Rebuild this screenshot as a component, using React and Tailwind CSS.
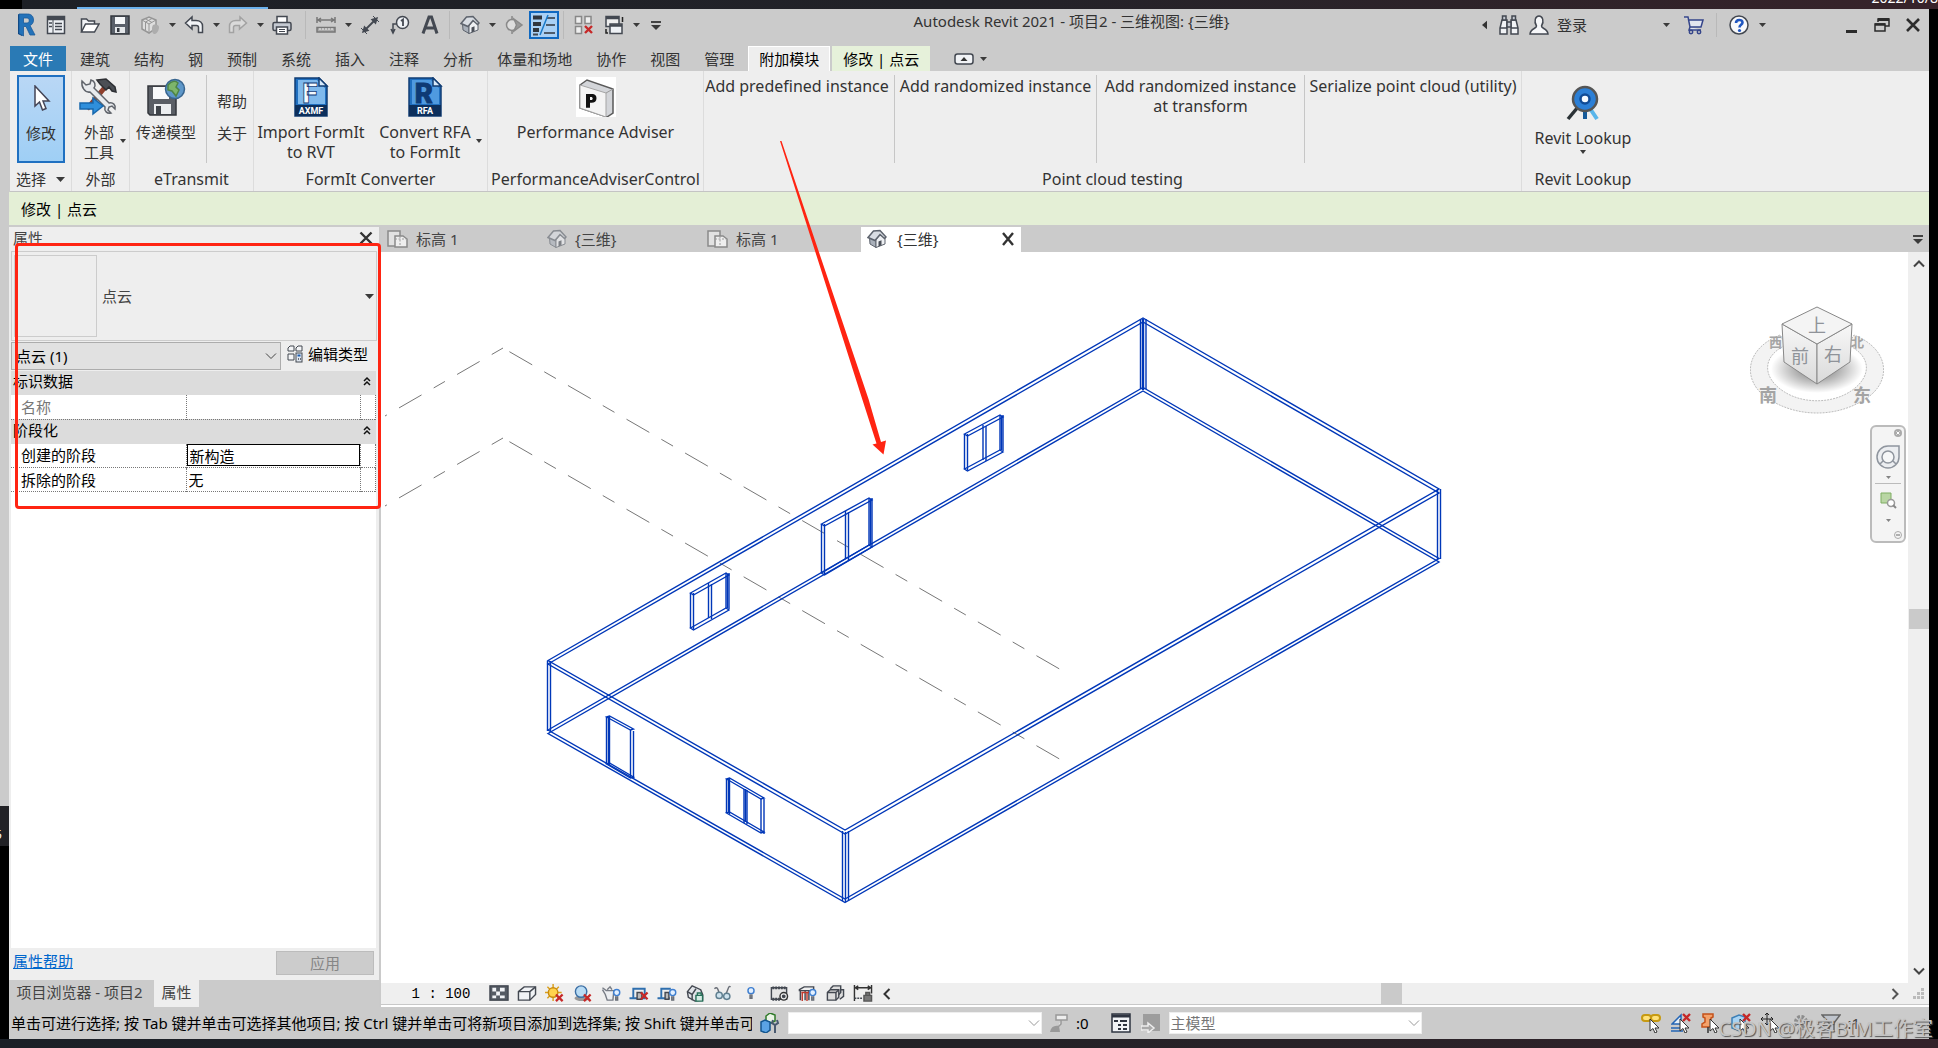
import React from "react";

const BLUE = "#0037b8";

/* ---------- small helpers ---------- */

function Icon({ children, className = "h-5 w-5", box = "0 0 20 20" }) {
  return (
    <svg viewBox={box} className={`shrink-0 ${className}`} fill="none" stroke="#434851" strokeWidth="1.5" aria-hidden="true">
      {children}
    </svg>
  );
}

function Caret({ className = "h-1 w-[7px]" }) {
  return (
    <svg viewBox="0 0 8 5" preserveAspectRatio="none" className={`shrink-0 ${className}`} aria-hidden="true">
      <path d="M0 0H8L4 5Z" fill="#3a3a3a" />
    </svg>
  );
}

function Chevron({ className }) {
  return (
    <svg viewBox="0 0 12 12" className={`h-3 w-3 shrink-0 ${className}`} fill="none" stroke="currentColor" aria-hidden="true">
      <path d="M1 3.5L6 8.5L11 3.5" />
    </svg>
  );
}

function RedCross({ x = 12, y = 12, s = 6 }) {
  return <path d={`M${x} ${y}l${s} ${s}M${x + s} ${y}l${-s} ${s}`} stroke="#c62828" strokeWidth="2.4" />;
}

function Bulb({ x = 15, y = 9 }) {
  return (
    <g stroke="#3f7fd0" strokeWidth="1.5">
      <circle cx={x} cy={y} r="3.2" fill="#e3f0ff" />
      <path d={`M${x - 1} ${y + 4}v4h2v-4`} fill="#8a8f98" stroke="#6a6f78" />
    </g>
  );
}

/* ---------- quick access icons ---------- */

const RevitLogo = (
  <Icon className="h-6 w-5" box="0 0 20 24">
    <path d="M2 1l4 2v20l-4-2z" fill="#0d3f78" stroke="none" />
    <path fillRule="evenodd" d="M3 1h8.500c4 0 6 2.600 6 6 0 2.800-1.400 4.700-3.500 5.500L19 22h-5l-4-8.500H7.500V23L3 20.500zM7.500 5v5H11c1.500 0 2.200-1 2.200-2.500S12.500 5 11 5z" fill="#2372b9" stroke="#1b5a9a" strokeWidth=".8" />
  </Icon>
);
const HomeList = (
  <Icon>
    <rect x="1.500" y="1.500" width="17" height="17" fill="#eef1f5" />
    <path d="M1.500 3.500h17" strokeWidth="3.500" />
    <path d="M7 5v13" strokeWidth="1" /><path d="M3 8h3M3 11.500h3M9 8.500h7M9 11.500h7M9 14.500h7" strokeWidth="1.600" />
  </Icon>
);
const Open = (
  <Icon>
    <path d="M1.500 17V4h5l2 2h6v3" fill="#f1f3f6" />
    <path d="M1.500 17L5.500 9H19l-4.500 8z" fill="#fff" />
  </Icon>
);
const Save = (
  <Icon>
    <path d="M1 1h18v18H1z" fill="#5a606a" stroke="#33373e" />
    <path d="M5 2h10v7H5z" fill="#f4f6f8" stroke="none" />
    <path d="M5 12h10v6H5z" fill="#e4e7ea" stroke="none" /><path d="M7 13h2.500v4H7z" fill="#33373e" stroke="none" />
  </Icon>
);
const Cube = (
  <Icon>
    <g stroke="#969696"><path d="M2 5l7-3 7 3v8l-7 5-7-4z" fill="#dedede" /><path d="M2 5l7 4 7-4M9 9v9M5 3.500l7 4M12 3.500L5.500 7v8" strokeWidth="1" /></g>
    <path d="M13 10c3-1 6 0 6 2s-1 6-4 7-4-6-2-9z" fill="#adadad" stroke="none" />
  </Icon>
);
const Undo = (
  <Icon>
    <path d="M1.500 8L8 2V5.500h4c4 0 6.500 2.500 6.500 5.500V17.500h-4V12.500c0-1.500-.8-2-2-2H8V14z" fill="#f1f3f6" />
  </Icon>
);
const Redo = (
  <Icon>
    <path d="M18.500 8L12 2V5.500H8c-4 0-6.500 2.500-6.500 5.500V17.500h4V12.500c0-1.500.8-2 2-2h4V14z" fill="#dadada" stroke="#a2a2a2" />
  </Icon>
);
const Print = (
  <Icon>
    <path d="M5 8V1.500h10V8" fill="#fff" />
    <rect x="1" y="7.500" width="18" height="8" rx="1.500" fill="#c5cad2" /><path d="M4.500 12h11v7h-11z" fill="#fff" /><path d="M7 14.500h6M7 16.500h6" strokeWidth="1" />
  </Icon>
);
const Measure = (
  <Icon>
    <g stroke="#777"><path d="M1 2v6M19 2v6M2 5h16M5 3L2 5l3 2M15 3l3 2-3 2" /><path d="M1 12.500h18v4.500H1z" fill="#aaa" /><path d="M4 13v2M7 13v2M10 13v2M13 13v2M16 13v2" stroke="#eee" strokeWidth="1" /></g>
  </Icon>
);
const Dim = (
  <Icon>
    <path d="M4.500 15.500l11-11" strokeWidth="1.800" /><path d="M3 17l1.500-5 3.500 3.500zM17 3l-1.500 5L12 4.500z" fill="#434851" /><path d="M1 13l6 6M13 1l6 6" strokeWidth="1" />
  </Icon>
);
const Tag = (
  <Icon>
    <circle cx="12.500" cy="7.500" r="6" fill="#eef1f5" /><path d="M11 6l2-1.500V11" strokeWidth="1.800" /><path d="M6.500 9H3v8M1 14l2 4 2-4" />
  </Icon>
);
const LetterA = (
  <Icon>
    <path d="M3 18.500L9 2h2.500L17 18.500M5.500 13h9" strokeWidth="3" />
  </Icon>
);
const House = (
  <Icon>
    <path d="M2.500 8.500L3 15l6 3.500V10l-3-4.500z" fill="#a9b0ba" stroke="#5d636d" strokeWidth="1" />
    <path d="M9 10.500l4.500-5L18 9v6l-9 3.500z" fill="#eef0f3" stroke="#5d636d" strokeWidth="1" />
    <path d="M1 8.500L6.500 2 13 1.500l6 6.500-1.500 1.500-4.500-4L8 11.500z" fill="#d9dde3" stroke="#5d636d" />
    <path d="M11.500 12.500l3-1.200v5l-3 1.200z" fill="#4a4f58" stroke="none" />
  </Icon>
);
const Section = (
  <Icon>
    <g stroke="#8a8a8a"><path d="M8 1v3M8 16v3" /><circle cx="8" cy="10" r="5.500" fill="#ddd" /><path d="M10 4l8 6-8 6 2.500-6z" fill="#999" /></g>
  </Icon>
);
const ThinLines = (
  <Icon className="h-[22px] w-6" box="0 0 24 22">
    <path d="M1 3.500h9M1 10h8M1 16h6" strokeWidth="4" stroke="#30363f" /><path d="M1 20.500h5" strokeWidth="2" />
    <path d="M15 4h8M14 11h9M12 19h11" stroke="#30363f" /><path d="M16 1L8 21" stroke="#1979c9" strokeWidth="1.500" />
  </Icon>
);
const CloseWins = (
  <Icon>
    <g stroke="#888" fill="#eee"><path d="M1.500 1.500h6v7h-6zM11 1.500h6v7h-6zM1.500 11.500h6v7h-6z" /></g><RedCross x={11} y={11} s={7} />
  </Icon>
);
const SwitchWins = (
  <Icon>
    <rect x="2" y="1.500" width="13" height="10" fill="#eee" /><path d="M2 3h13" strokeWidth="2.500" /><rect x="6" y="9" width="12" height="9.500" fill="#eef1f5" /><path d="M6 10.500h12" strokeWidth="2.500" /><path d="M18.500 2v5M2 14v4h2" stroke="#222" />
  </Icon>
);

const quick = [
  ["应用菜单", RevitLogo], ["主页", HomeList], ["gap"], ["打开", Open], ["保存", Save], ["同步", Cube], ["arrow", "同步选项"],
  ["放弃", Undo], ["arrow", "放弃列表"], ["重做", Redo], ["arrow", "重做列表"], ["打印", Print], ["gap"], ["sep"],
  ["测量", Measure], ["arrow", "测量选项"], ["对齐尺寸标注", Dim], ["按类别标记", Tag], ["文字", LetterA], ["sep"],
  ["默认三维视图", House], ["arrow", "三维视图选项"], ["剖面", Section], ["细线", ThinLines], ["sep"],
  ["关闭非活动视图", CloseWins], ["切换窗口", SwitchWins], ["arrow", "窗口列表"],
];

function QuickItem({ item }) {
  const [name, extra] = item;
  if (name === "gap") return <span className="w-1" />;
  if (name === "sep") return <span className="mx-1 h-7 w-0.5 border-l border-[#b9b9b9]" />;
  if (name === "arrow")
    return (
      <button aria-label={extra} className="flex h-7 w-[14px] items-center justify-center"><Caret /></button>
    );
  return (
    <button
      aria-label={name}
      className={`flex h-7 w-[30px] items-center justify-center ${name === "细线" ? "border-2 border-[#1068c0] bg-[#a9d0f5]" : ""}`}
    >
      {extra}
    </button>
  );
}

function TitleBar() {
  return (
    <header className="flex h-[37px] items-start pt-0.5 text-[#333]">
      <div className="flex items-center pl-0.5">
        {quick.map((q, i) => <QuickItem key={i} item={q} />)}
        <button aria-label="自定义快速访问工具栏" className="ml-2 flex flex-col items-center gap-0.5">
          <span className="h-0.5 w-2.5 bg-[#444]" />
          <Caret className="h-[5px] w-2.5" />
        </button>
      </div>
      <h1 className="flex-1 text-center text-[15px] leading-5 whitespace-nowrap">Autodesk Revit 2021 - 项目2 - 三维视图: {"{三维}"}</h1>
      <div className="flex h-7 items-center pr-2">
        <button aria-label="展开搜索" className="mr-3"><svg viewBox="0 0 6 10" className="h-2.5 w-[5px]"><path d="M6 0V10L0 5Z" fill="#333" /></svg></button>
        <button aria-label="搜索" className="mr-2.5">
          <Icon className="h-5 w-5">
            <path d="M3 5L1 13v6h7V5zM17 5l2 8v6h-7V5z" fill="#f1f3f6" /><path d="M3.500 1h3.500v4H3.500zM13 1h3.500v4H13zM8 7h4v5H8zM1 13h7M12 13h7" fill="#c5cad2" />
          </Icon>
        </button>
        <button className="flex items-center gap-2 text-[15px] leading-5">
          <Icon>
            <path d="M7.500 11c-3-5-1-10 2.500-10s5.500 5 2.500 10c0 3 6 2 6.500 8H1c.5-6 6.500-5 6.500-8z" fill="#f6f7f9" />
          </Icon>
          登录
        </button>
        <button aria-label="登录选项" className="mr-3.5 ml-[76px]"><Caret /></button>
        <button aria-label="应用商店" className="mr-3">
          <Icon><path d="M0 2h4l2 10h11l2-7H5M6 12l-1 3h12" stroke="#35458a" fill="#e3e6ef" /><circle cx="7" cy="17" r="1.700" stroke="#35458a" /><circle cx="15" cy="17" r="1.700" stroke="#35458a" /></Icon>
        </button>
        <span className="mr-3 h-6 border-l border-[#b9b9b9]" />
        <button aria-label="帮助" className="mr-2.5">
          <Icon><circle cx="10" cy="10" r="9" fill="#f8f9fb" /><path d="M7 8c0-4 6.500-4 6.500-.5 0 2.500-3 2.200-3 5" stroke="#2056c0" strokeWidth="2.600" /><circle cx="10.500" cy="15.500" r="1.600" fill="#2056c0" stroke="none" /></Icon>
        </button>
        <button aria-label="帮助选项"><Caret /></button>
        <button aria-label="最小化" className="ml-20 h-4 pt-3"><span className="block h-[3px] w-[11px] bg-[#2b2b2b]" /></button>
        <button aria-label="还原" className="ml-4">
          <Icon className="h-4 w-[18px]" box="0 0 18 16"><path d="M5 5V2h11v7h-4" stroke="#2b2b2b" /><path d="M5 2.500h11" stroke="#2b2b2b" strokeWidth="3" /><path d="M2 7h10v7H2z" stroke="#2b2b2b" /><path d="M2 7.500h10" stroke="#2b2b2b" strokeWidth="2.500" /></Icon>
        </button>
        <button aria-label="关闭" className="ml-3.5"><Icon className="h-4 w-4" box="0 0 16 16"><path d="M2 2l12 12M14 2L2 14" stroke="#2b2b2b" strokeWidth="2.600" /></Icon></button>
      </div>
    </header>
  );
}

/* ---------- ribbon ---------- */

const ribbonTabs = ["建筑", "结构", "钢", "预制", "系统", "插入", "注释", "分析", "体量和场地", "协作", "视图", "管理"];

function RibbonTabs() {
  return (
    <nav className="flex h-[25px] text-[15px] leading-[22px] text-[#333]">
      <button className="ml-px w-14 bg-[#2a7ab5] text-white">文件</button>
      <div className="flex pl-0.5">
        {ribbonTabs.map((t) => <button key={t} className="px-3 whitespace-nowrap">{t}</button>)}
      </div>
      <button className="ml-0.5 border border-b-0 border-white bg-[#eee] px-2.5 text-black">附加模块</button>
      <button className="ml-0.5 bg-[#e6f1da] px-[11px] whitespace-nowrap text-black">修改 | 点云</button>
      <button aria-label="最小化功能区" className="ml-6 flex items-center gap-1.5">
        <Icon className="h-3 w-5" box="0 0 20 12"><rect x="1" y="1" width="18" height="10" rx="2.500" fill="#f1f3f6" /><path d="M6.500 8h7l-3.500-4z" fill="#333" stroke="none" /></Icon>
        <Caret />
      </button>
    </nav>
  );
}

function Panel({ title, className, children, caret }) {
  return (
    <section className={`flex shrink-0 flex-col border-r border-[#dcdcdc] ${className}`}>
      <div className="flex flex-1">{children}</div>
      <h2 className={`flex h-6 items-center justify-center gap-2.5 whitespace-nowrap ${/[a-z]/.test(title) ? "text-base" : ""}`}>
        {title}
        {caret && <Caret className="h-[5px] w-[9px]" />}
      </h2>
    </section>
  );
}

function BigButton({ icon, lines, className = "", arrow }) {
  return (
    <button className={`relative flex flex-col items-center pt-1.5 leading-5 whitespace-nowrap ${className}`}>
      <span className="flex h-[45px] items-start justify-center">{icon}</span>
      {lines.map((l) => <span key={l}>{l}</span>)}
      {arrow && <span className="absolute top-[68px] right-0 flex"><Caret className="h-1 w-1.5" /></span>}
    </button>
  );
}

const Tools = (
  <Icon className="h-10 w-10" box="0 0 40 40">
    <path d="M8 32L27 9" stroke="#8f3f2c" strokeWidth="5" />
    <path d="M18 3l9-1 9 8 1 5-4-1-3-4-3 3-6-6z" fill="#4c4f55" stroke="#2d2f33" />
    <path d="M3 4l4 4 4-1 1-4c4 1 5 5 3 8l15 15c4-1 7 2 6 6l-3-3-3 1-1 3 3 3c-4 1-7-2-6-6L11 15c-5 1-9-5-8-11z" fill="#e9ebee" stroke="#60646b" />
    <path d="M1 26h13v-5l10 8-10 8v-5H1z" fill="#2f8fdc" stroke="#1868ad" />
  </Icon>
);
const Transmit = (
  <Icon className="h-10 w-10" box="0 0 40 38">
    <path d="M2 8h28v29H4l-2-2z" fill="#5a5e65" stroke="#33363b" /><path d="M7 9h16v12H7z" fill="#f8f9fa" stroke="none" /><path d="M8 26h17v10H8z" fill="#eceef0" stroke="none" /><path d="M10 28h5v8h-5z" fill="#40444a" stroke="none" />
    <circle cx="29" cy="11" r="9.500" fill="#5e97c9" stroke="#38658f" /><path d="M22 7c4-5 8-4 10-2l-2 4 3 3-3 6-4-5-4-1z" fill="#7db56b" stroke="#4f8446" />
  </Icon>
);

function FileIcon({ letter, label }) {
  return (
    <Icon className="h-10 w-9" box="0 0 36 40">
      <path d="M2 1h24l8 8v30H2z" fill="#1f6fc0" stroke="#123e74" />
      <path d="M5 3h19l8 8v16H5z" fill={letter === "F" ? "#7fb9ec" : "#4f9ae0"} stroke="none" />
      <path d="M2 28h32v11H2z" fill="#0c2f5c" stroke="none" /><path d="M26 1v8h8z" fill="#d7e9fa" stroke="#123e74" />
      <text x="17" y="26" textAnchor="middle" fontSize="28" fontWeight="900" fontFamily="Roboto, sans-serif" fill={letter === "F" ? "#f4faff" : "#0e3a75"} stroke="#0e3a75" strokeWidth=".8">{letter}</text>
      <text x="18" y="37" textAnchor="middle" fontSize="9" fontWeight="700" fontFamily="Roboto, sans-serif" fill="#fff" stroke="none">{label}</text>
    </Icon>
  );
}

const Adviser = (
  <Icon className="h-10 w-10" box="0 0 40 40">
    <path d="M0 0h40v40H0z" fill="#fff" stroke="none" />
    <path d="M4 8l7-5 26 9v24l-6 4L4 31z" fill="#d3d5d9" stroke="#5a5a5a" /><path d="M4 8l26 8v24L4 31z" fill="#f4f4f4" stroke="#a5a5a5" strokeWidth="1" /><path d="M30 16l7-4" stroke="#999" strokeWidth="1" />
    <path fillRule="evenodd" d="M10 17h5.500c4 0 5 2 5 4.200 0 3-2 4.500-5 4.500H14v5h-4zM14 20v3h1.200c1 0 1.500-.6 1.500-1.500S16 20 15.200 20z" fill="#111" stroke="none" />
  </Icon>
);
const Lookup = (
  <Icon className="h-9 w-9" box="0 0 36 36">
    <path d="M13 22L3 34" stroke="#2b3236" strokeWidth="3.500" /><path d="M20 24v10" stroke="#155a9a" strokeWidth="4" /><path d="M24 22l8 12" stroke="#58b5ea" strokeWidth="4" />
    <circle cx="20" cy="14" r="12" fill="#2b7fd6" stroke="#555" strokeWidth="2.500" /><circle cx="20" cy="14" r="4.500" fill="#f4faff" stroke="#0f4b96" strokeWidth="2.500" />
  </Icon>
);

function PointButton({ lines, className = "" }) {
  return (
    <button className={`my-1 flex flex-col items-center border-[#c6c6c6] pt-px text-base leading-5 whitespace-nowrap ${className}`}>
      {lines.map((l) => <span key={l}>{l}</span>)}
    </button>
  );
}

function Ribbon() {
  return (
    <div className="ml-px flex h-[121px] border-b border-[#c4c4c4] bg-[#eee] text-[15px] text-[#333]">
      <Panel title="选择" className="w-[62px]" caret>
        <button className="mt-1 ml-[7px] flex h-[88px] w-12 flex-col items-center border-2 border-[#1f70c1] bg-gradient-to-b from-[#b9d7f5] to-[#9fcff5] pt-2 leading-5">
          <Icon className="mb-3 h-[26px] w-5" box="0 0 20 26"><path d="M4 1v20l4.500-4 3 8 3.500-1.500-3-7.500H18z" fill="#fff" stroke="#445" /></Icon>
          修改
        </button>
      </Panel>
      <Panel title="外部" className="w-[58px]">
        <BigButton icon={Tools} lines={["外部", "工具"]} arrow className="w-[54px]" />
      </Panel>
      <Panel title="eTransmit" className="w-[124px]">
        <BigButton icon={Transmit} lines={["传递模型"]} className="mr-1 w-[72px]" />
        <div className="my-1 flex flex-1 flex-col items-center gap-3 border-l border-[#c6c6c6] pt-4 pl-1 leading-5">
          <button>帮助</button>
          <button>关于</button>
        </div>
      </Panel>
      <Panel title="FormIt Converter" className="w-[234px]">
        <BigButton icon={<FileIcon letter="F" label="AXMF" />} lines={["Import FormIt", "to RVT"]} className="w-[114px] text-base" />
        <BigButton icon={<FileIcon letter="R" label="RFA" />} lines={["Convert RFA", "to FormIt"]} arrow className="w-[114px] text-base" />
      </Panel>
      <Panel title="PerformanceAdviserControl" className="w-[216px]">
        <BigButton icon={Adviser} lines={["Performance Adviser"]} className="flex-1 text-base" />
      </Panel>
      <Panel title="Point cloud testing" className="w-[818px]">
        <PointButton lines={["Add predefined instance"]} className="w-[191px] border-r pr-1" />
        <PointButton lines={["Add randomized instance"]} className="w-[202px] border-r" />
        <PointButton lines={["Add randomized instance", "at transform"]} className="w-[208px] border-r" />
        <PointButton lines={["Serialize point cloud (utility)"]} className="flex-1" />
      </Panel>
      <section className="flex w-[122px] flex-col items-center text-base">
        <button className="flex flex-1 flex-col items-center pt-3.5 leading-5">
          {Lookup}
          <span className="pt-[7px]">Revit Lookup</span>
          <Caret className="mt-0.5 h-1 w-1.5" />
        </button>
        <h2 className="flex h-6 items-center">Revit Lookup</h2>
      </section>
    </div>
  );
}

/* ---------- properties palette ---------- */

const EditType = (
  <Icon className="h-[18px] w-4" box="0 0 16 18">
    <path d="M1 3l2-2h4v5H1zM9 3l2-2h4v5H9zM1 9h6v6H1z" fill="#f4f5f7" strokeWidth="1" /><rect x="9" y="8" width="6" height="9" fill="#dfe6ef" strokeWidth="1" /><path d="M10.500 10.500h3" stroke="#1d5fb0" strokeWidth="2" /><path d="M11 14h1M13 14h1" />
  </Icon>
);

function GroupRow({ title }) {
  return (
    <tr className="h-6 bg-[#dcdcdc]">
      <th colSpan="2" scope="colgroup" className="p-0 pb-1 pl-0.5 text-left font-normal">{title}</th>
      <td className="p-0 pb-1 pr-0.5 text-center">
        <button aria-label={`折叠${title}`} className="block w-full"><svg viewBox="0 0 8 10" className="mx-auto h-2.5 w-2" fill="none" stroke="#111" strokeWidth="1.500"><path d="M1 5l3-3 3 3M1 9l3-3 3 3" /></svg></button>
      </td>
    </tr>
  );
}

function PropRow({ label, value, muted, active }) {
  return (
    <tr className="h-6 border-b border-dotted border-[#777]">
      <th scope="row" className={`border-r border-dotted border-[#777] p-0 pl-2.5 text-left font-normal ${muted ? "text-[#777]" : ""}`}>{label}</th>
      <td className="border-r border-dotted border-[#777] p-0">
        <input aria-label={label} defaultValue={value} className={`block h-[22px] w-full px-0.5 ${active ? "border border-black" : ""}`} />
      </td>
      <td className="border-r border-dotted border-[#777] p-0" />
    </tr>
  );
}

function Properties() {
  return (
    <aside className="relative flex w-[371px] shrink-0 flex-col border-r border-[#cacaca] text-[15px] leading-5 text-black">
      <div className="flex flex-1 flex-col bg-[#eee]">
        <div className="flex h-6 items-center justify-between pr-1.5 pb-0.5 pl-1 text-[#444]">
          <h2>属性</h2>
          <button aria-label="关闭属性"><Icon className="h-3.5 w-3.5" box="0 0 14 14"><path d="M1.500 1.500l11 11M12.500 1.500l-11 11" stroke="#333" strokeWidth="2.400" /></Icon></button>
        </div>
        <button className="mx-0.5 flex h-[90px] items-center border border-[#ccc] px-0.5 text-[#444]">
          <span className="mr-[5px] h-[82px] w-[83px] border border-[#ccc]" />
          <span className="flex-1 text-left">点云</span>
          <Caret className="h-[5px] w-[9px]" />
        </button>
        <div className="flex h-[30px] items-center pl-0.5">
          <div className="relative h-7 w-[270px]">
            <select aria-label="类型过滤" className="h-full w-full appearance-none border border-[#acacac] bg-[#e1e1e1] pl-1"><option>点云 (1)</option></select>
            <Chevron className="pointer-events-none absolute top-2 right-1 text-[#444]" />
          </div>
          <button className="ml-1.5 flex items-center gap-[5px] pb-1">{EditType}编辑类型</button>
        </div>
        <div className="mr-[3px] ml-0.5 flex-1 bg-white">
          <table className="w-full table-fixed border-collapse">
            <colgroup><col className="w-[175px]" /><col /><col className="w-[15px]" /></colgroup>
            <tbody>
              <GroupRow title="标识数据" />
              <PropRow label="名称" value="" muted />
              <GroupRow title="阶段化" />
              <PropRow label="创建的阶段" value="新构造" active />
              <PropRow label="拆除的阶段" value="无" />
            </tbody>
          </table>
        </div>
        <div className="flex h-8 items-center justify-between pr-[5px] pb-0.5 pl-1">
          <a href="#help" className="pb-1 text-[#0066cc] underline">属性帮助</a>
          <button disabled className="h-6 w-[98px] border border-[#bcbcbc] bg-[#ccc] text-[#868686]">应用</button>
        </div>
      </div>
      <div className="flex h-[27px] bg-[#cbcbcb] text-[#444]">
        <button className="w-[145px] pr-1 pb-1 whitespace-nowrap">项目浏览器 - 项目2</button>
        <button className="w-[45px] bg-[#eee] pb-1">属性</button>
      </div>
      <div className="pointer-events-none absolute top-4 -right-0.5 left-1.5 z-10 h-[266px] rounded-[4px] border-[3px] border-[#ff2412]" />
    </aside>
  );
}

/* ---------- view area ---------- */

const Sheet = (
  <Icon className="h-[18px] w-[21px]" box="0 0 21 18"><path d="M1 1h12v15H1z" fill="#e2e2e2" stroke="#8b8b8b" /><path d="M8 6h8l4 3v8H8z" fill="#efefef" stroke="#8b8b8b" /><path d="M13 6v10M8 9h11" stroke="#9b9b9b" strokeWidth="1" strokeDasharray="2 1.500" /></Icon>
);
const docs = [["标高 1", Sheet], ["{三维}", House], ["标高 1", Sheet]];

function DocTabs() {
  return (
    <div className="flex h-[25px] items-center bg-[#cbcbcb] text-[15px] leading-5 text-[#444]">
      {docs.map(([t, icon], i) => (
        <button key={i} className={`flex w-40 items-center gap-2 pb-0.5 pl-1.5 ${i === 1 ? "[&_svg]:opacity-60" : ""}`}>{icon}{t}</button>
      ))}
      <div className="flex h-full w-40 items-center justify-between bg-white px-1.5 pb-0.5 text-[#333]">
        <button className="flex items-center gap-2.5">{House}{"{三维}"}</button>
        <button aria-label="关闭视图"><Icon className="h-3.5 w-3.5" box="0 0 14 14"><path d="M2 1l10 12M12 1L2 13" stroke="#333" strokeWidth="2.400" /></Icon></button>
      </div>
      <button aria-label="视图列表" className="mr-1.5 ml-auto flex flex-col items-center gap-0.5"><span className="h-0.5 w-2.5 bg-[#444]" /><Caret className="h-[5px] w-2.5" /></button>
    </div>
  );
}

/* Framed opening with an optional mullion; posts are [x, top, bottom]. */
function Opening({ posts, dx = 3, dy = 2 }) {
  const [a, b] = [posts[0], posts[posts.length - 1]];
  return (
    <g>
      {posts.map(([x, t, m], i) => (
        <path key={i} d={`M${x} ${t}V${m}M${x + dx} ${t + (i % 2 ? 1 : 0)}V${m + 1}`} />
      ))}
      <path d={`M${a[0]} ${a[1]}L${b[0]} ${b[1]}l${dx} ${dy}L${a[0] + dx} ${a[1] + dy}Z`} />
      <path d={`M${a[0]} ${a[2]}L${b[0]} ${b[2]}l${dx} ${dy}L${a[0] + dx} ${a[2] + dy}Z`} />
    </g>
  );
}

function Model() {
  return (
    <svg viewBox="381 252 1527 731" className="absolute inset-0 h-full w-full" fill="none" role="img" aria-label="三维视图">
      <g stroke="#777" strokeWidth="1">
        <path d="M503 348L385 416M503 438L385 506" strokeDasharray="13 14 26 14" />
        <path d="M503 348L1063 671M503 438L1063 761" strokeDasharray="13.500 13.900 26.300 13.900" strokeDashoffset="20" />
      </g>
      <g stroke={BLUE} strokeWidth="1.400">
        <path d="M548 660.500L1143 318L1439 489L845 830Z" />
        <path d="M548 664L1143 322L1439 493L845 834Z" />
        <path d="M548 730L1143 387.500L1439 558.500L845 899Z" />
        <path d="M548 733.500L1143 391L1439 562L845 902.500Z" />
        <path d="M547.500 661V731M550.500 661V732M842.500 831V901M845.500 832V902M848.500 831V901M1140.500 319V389M1146 319V389M1437.500 489V559M1440.500 489V559" />
        <path d="M1143 319V390" strokeWidth="2.400" />
        <Opening posts={[[964.500, 434, 469], [983, 425, 460], [1000, 415, 450]]} />
        <Opening posts={[[821.500, 524, 573], [845.500, 511, 559], [869, 498, 545]]} />
        <Opening posts={[[690.500, 593, 628], [708.500, 583, 618], [726, 573, 608]]} />
        <Opening posts={[[606.500, 717, 764], [630.500, 730, 778]]} dy={-1} />
        <Opening posts={[[726.500, 779, 813], [744, 789, 823], [761, 799, 833]]} dy={-1} />
        <path d="M1001.500 416V450M870.500 499V545M727.500 574V608M608.500 717V764M728.500 779V812M745.500 789V822" strokeWidth="1.500" />
      </g>
    </svg>
  );
}

function ViewCube() {
  return (
    <svg viewBox="1750 300 134 116" className="absolute top-12 right-6 h-[116px] w-[134px]" fill="none" role="img" aria-label="ViewCube">
      <defs>
        <radialGradient id="shade"><stop offset=".3" stopColor="#000" stopOpacity=".4" /><stop offset="1" stopColor="#000" stopOpacity="0" /></radialGradient>
        <linearGradient id="face" x1="0" y1="0" x2="0" y2="1"><stop offset="0" stopColor="#f8f8f8" /><stop offset="1" stopColor="#dadada" /></linearGradient>
      </defs>
      <path d="M1780 335C1742 350 1742 385 1772 401C1799 417 1835 417 1862 401C1892 385 1892 350 1854 335L1848 345C1872 356 1872 377 1851 391C1832 404 1802 404 1783 391C1762 377 1762 356 1786 345Z" fill="#f3f3f3" stroke="#bdbdbd" strokeDasharray="2 1" />
      <ellipse cx="1817" cy="369" rx="46" ry="24" fill="url(#shade)" />
      <g fill="#a4a4a4" fontWeight="700" fontFamily="Noto Sans CJK SC, sans-serif"><text x="1769" y="347" fontSize="13">西</text><text x="1851" y="347" fontSize="13">北</text><text x="1759" y="402" fontSize="18">南</text><text x="1853" y="402" fontSize="18">东</text></g>
      <path d="M1782 324L1817 344V384L1784 362Z" fill="url(#face)" stroke="#888" />
      <path d="M1852 324L1817 344V384L1850 362Z" fill="url(#face)" stroke="#888" />
      <path d="M1817 307L1852 324L1817 344L1782 324Z" fill="#f4f4f4" stroke="#888" />
      <g fontSize="18" fill="#8f9399" fontFamily="Noto Sans CJK SC, sans-serif"><text x="1808" y="332">上</text><text x="1791" y="363">前</text><text x="1824" y="361">右</text></g>
    </svg>
  );
}

function NavBar() {
  return (
    <div className="absolute top-[173px] right-0.5 flex h-[118px] w-9 flex-col items-center rounded-md border-2 border-[#bbb] bg-[#f4f4f4]">
      <button aria-label="关闭导航栏" className="self-end p-0.5"><Icon className="h-2 w-2" box="0 0 8 8"><circle cx="4" cy="4" r="4" fill="#aaa" stroke="none" /><path d="M2.500 2.500l3 3M5.500 2.500l-3 3" stroke="#fff" strokeWidth="1" /></Icon></button>
      <button aria-label="控制盘" className="mt-1.5 flex flex-col items-center gap-[7px]">
        <Icon className="h-6 w-6" box="0 0 24 24"><path d="M12 1h11v11a11 11 0 1 1-11-11z" fill="#eceef1" stroke="#8f959e" /><circle cx="12" cy="12" r="6" fill="#f6f7f8" stroke="#8f959e" /><path d="M4 19l3-3M20 19l-3-3" stroke="#8f959e" /></Icon>
        <Caret className="h-[3px] w-[5px] opacity-60" />
      </button>
      <span className="my-1 h-px w-[26px] bg-[#bbb]" />
      <button aria-label="缩放" className="mt-1 flex flex-col items-center gap-2.5">
        <Icon className="h-[17px] w-[17px]" box="0 0 17 17"><path d="M1 1h10v10H1z" fill="#b9d6a4" stroke="#7fae62" strokeWidth="1" /><circle cx="11" cy="11" r="3.500" fill="#fff" stroke="#999" /><path d="M13 13l3 3" stroke="#888" strokeWidth="2" /></Icon>
        <Caret className="h-[3px] w-[5px] opacity-60" />
      </button>
      <button aria-label="导航栏选项" className="mt-auto self-end p-0.5"><Icon className="h-2 w-2" box="0 0 8 8"><circle cx="4" cy="4" r="3.500" stroke="#aaa" strokeWidth="1" /><path d="M2 4h4" stroke="#999" /></Icon></button>
    </div>
  );
}

const viewIcons = [
  ["详细程度", <><rect x="0.500" y="2" width="19" height="15" fill="#555b64" /><path d="M3 4h4v4H3zM11 4h5v4h-5zM7 8h4v4H7zM3 12h4v3H3zM11 12h5v3h-5z" fill="#f1f3f6" stroke="none" /></>],
  ["视觉样式", <><path d="M1 8l6-5h12v8l-6 6H1z" fill="#f1f3f6" /><path d="M1 8h12v9M13 8l6-5" /></>],
  ["日光路径", <><path d="M8 0v18M-1 9h18M2 3l12 12M14 3L2 15" stroke="#d99f1b" /><circle cx="8" cy="9" r="5" fill="#ffd34d" stroke="#c98b10" /><RedCross x={11} y={11} s={7} /></>],
  ["阴影", <><ellipse cx="9" cy="15" rx="8" ry="3" fill="#999" stroke="none" /><circle cx="8" cy="8" r="6" fill="#b9dcf5" stroke="#3b6fa5" /><RedCross x={11} y={11} s={7} /></>],
  ["渲染", <><path d="M1 4l4 3h8l-1 10H6L4 11 1 6M6 6l3-3 2 3" fill="#eceef1" stroke="#777c85" /><Bulb x={16} /></>],
  ["裁剪视图", <><path d="M4 16V5h13M0 15h16V5" stroke="#2f6fae" strokeWidth="2" /><path d="M8 9h5v7H8z" fill="#bbb" /><RedCross x={12} y={9} s={7} /></>],
  ["显示裁剪区域", <><path d="M4 16V5h10M0 15h13" stroke="#2f6fae" strokeWidth="2" /><path d="M8 9h4v7H8z" fill="#bbb" /><Bulb x={16} /></>],
  ["锁定三维视图", <><path d="M2 8l5-6 9 4 2 5v6l-8 1-7-4z" fill="#e1e4e8" /><path d="M2 8l5 3 4-6M7 11v6" /><path d="M11 12h7v6h-7zM12.500 12V9.500h4V12" fill="#d6ece4" stroke="#28705a" /></>],
  ["临时隐藏", <><path d="M1 5c3-3 4 1 5 5M18 3c-3-2-2 4-6 9" stroke="#6a6f78" /><circle cx="6" cy="12" r="3.300" fill="#cfe3ee" stroke="#5f7f90" /><circle cx="14" cy="13" r="3.300" fill="#cfe3ee" stroke="#5f7f90" /></>],
  ["显示隐藏图元", <Bulb x={10} y={7} />],
  ["临时视图属性", <><path d="M2 4h16v12H2z" fill="#e5e5e5" /><path d="M3 4h15M3 16h8" strokeWidth="3" strokeDasharray="2 1" /><circle cx="15" cy="13" r="4" fill="#eee" stroke="#333" /><circle cx="15" cy="13" r="1.300" fill="#333" /></>],
  ["分析模型", <><path d="M2 6l5-3h10v4H2zM3 7v10M8 7v10M12 7v10" /><path d="M4 9h8M5 9v9M10 9v9" stroke="#c0392b" /><Bulb x={16} /></>],
  ["位移集", <><path d="M5 5l3-3h8v7l-3 3M16 6h3v7l-4 3" fill="#ddd" /><path d="M2 9l3-3h9v8l-3 3H2z" fill="#ddd" /><path d="M2 9h9v8M11 9l3-3" /></>],
  ["约束", <><path d="M1 1v17M19 1v9M2 4h16M5 2L2 4l3 2M15 2l3 2-3 2" stroke="#333" /><path d="M1 15h8" strokeDasharray="2 1" /><path d="M11 12h8v6h-8zM13 12V9h4v3" fill="#777" stroke="#555" /></>],
];

function ViewBar() {
  return (
    <div className="flex h-6 flex-col border-b-2 border-white">
      <div className="flex flex-1 items-center border-b border-[#c8c8c8] bg-[#efefef]">
        <button className="w-[104px] pl-4 text-center font-['Liberation_Mono',monospace] text-[14px] leading-4 text-black">1 : 100</button>
        {viewIcons.map(([n, d]) => <button key={n} aria-label={n} className="flex w-7 justify-center"><Icon className="h-[19px] w-5">{d}</Icon></button>)}
        <button aria-label="向左滚动" className="ml-1 rotate-90 text-[#333]"><Chevron className="stroke-2" /></button>
        <div className="flex h-full flex-1">
          <span className="grow-[492]" />
          <span className="h-full w-[21px] bg-[#cacaca]" />
          <span className="grow-[491]" />
        </div>
        <button aria-label="向右滚动" className="-rotate-90 text-[#555]"><Chevron className="stroke-2" /></button>
        <svg viewBox="0 0 12 12" className="mr-1 ml-3 h-3 w-3" fill="#bbb"><path d="M8 0h3v3H8zM4 4h3v3H4zM8 4h3v3H8zM0 8h3v3H0zM4 8h3v3H4zM8 8h3v3H8z" /></svg>
      </div>
    </div>
  );
}

function ViewArea() {
  return (
    <main className="flex min-w-0 flex-1 flex-col border-l border-[#cacaca]">
      <DocTabs />
      <div className="flex flex-1">
        <div className="relative flex-1 bg-white">
          <Model />
          <ViewCube />
          <NavBar />
        </div>
        <div className="flex w-[21px] flex-col items-center bg-[#efefef] py-1.5 text-[#444]">
          <button aria-label="向上滚动" className="rotate-180"><Chevron className="stroke-2" /></button>
          <div className="flex flex-1 flex-col items-center"><span className="grow-[339]" /><span className="h-5 w-5 bg-[#cacaca]" /><span className="grow-[337]" /></div>
          <button aria-label="向下滚动"><Chevron className="stroke-2" /></button>
        </div>
      </div>
      <ViewBar />
    </main>
  );
}

/* ---------- status bar ---------- */

const Pointer = <path d="M9 6v12l3-2.500 2 4.500 2-1-2-4h4z" fill="#fff" stroke="#333" strokeWidth="1" />;
const selectIcons = [
  ["选择链接", <><rect x="1" y="2" width="9" height="6" rx="3" stroke="#c79a12" strokeWidth="2" fill="#ffe27a" /><rect x="10" y="2" width="9" height="6" rx="3" stroke="#c79a12" strokeWidth="2" fill="#ffe27a" />{Pointer}</>],
  ["选择基线图元", <><path d="M1 11l9-9v9zM0 15h12M0 18h12" stroke="#2566b5" fill="#e4effa" />{Pointer}<RedCross x={12} y={1} s={7} /></>],
  ["选择锁定图元", <><path d="M2 1h10v3l-2 1v4l3 2v3H1v-3l3-2V5L2 4z" fill="#f4a26b" stroke="#c4521b" /><path d="M7 14v6" stroke="#333" />{Pointer}</>],
  ["按面选择图元", <><path d="M1 5l7-3 6 2v11l-7 2-6-2z" fill="#a8d3f3" stroke="#3c7fb6" />{Pointer}<RedCross x={12} y={1} s={7} /></>],
  ["选择时拖曳", <><path d="M6 0v12M0 6h12M4 2l2-2 2 2M4 10l2 2 2-2M2 4L0 6l2 2M10 4l2 2-2 2" stroke="#222" strokeWidth="1" />{Pointer}</>],
  ["后台进程", <circle cx="10" cy="9" r="5" stroke="#8c8c8c" strokeWidth="4" strokeDasharray="2.500 1.400" />],
  ["过滤器", <><path d="M1 2h18l-6 8v8H8v-8z" fill="#bfc4cc" stroke="#666" /></>],
];

function StatusBar() {
  return (
    <footer className="flex h-8 items-center bg-[#cbcbcb] pb-px pl-0.5 text-[15px] leading-5 text-black">
      <p className="w-[741px] overflow-hidden whitespace-nowrap">单击可进行选择; 按 Tab 键并单击可选择其他项目; 按 Ctrl 键并单击可将新项目添加到选择集; 按 Shift 键并单击可</p>
      <button aria-label="工作集" className="mx-2">
        <Icon><path d="M6 3l4-3 5 2v6l-4 2-5-2z" fill="#eaf4e6" stroke="#2f7a2a" /><path d="M1 9l4-2 5 2v8l-4 3-5-2z" fill="#5ba3e4" stroke="#14568f" /><path d="M15 20V11M13 7l-1 3 3 2 3-2-1-3" stroke="#4a5a70" strokeWidth="2" /></Icon>
      </button>
      <div className="relative h-[22px] w-[254px]">
        <select aria-label="活动工作集" className="h-full w-full appearance-none border border-[#eee] bg-white"><option></option></select>
        <Chevron className="pointer-events-none absolute top-[5px] right-0.5 text-[#999]" />
      </div>
      <button aria-label="编辑请求" className="ml-2 flex items-center gap-1.5"><Icon><path d="M6 2h11v5H6zM11 7v4l-3 3" stroke="#999" fill="#eee" /><path d="M0 19c1-5 4-7 9-6l1 6z" fill="#999" stroke="none" /></Icon>:0</button>
      <button aria-label="设计选项" className="ml-[22px]"><Icon><rect x="1" y="1" width="18" height="18" fill="#f1f3f6" stroke="#2e3440" /><path d="M1 3h18" strokeWidth="3" stroke="#2e3440" /><path d="M3 8h4M9 8h7M7 12h3M12 12h4M7 16h3M12 16h4" stroke="#2e3440" strokeWidth="2" /></Icon></button>
      <button aria-label="拾取以编辑" className="mr-2 ml-2.5"><Icon><path d="M2 1h17v17H2z" fill="#9d9d9d" stroke="none" /><path d="M0 13h7v-3l6 5-6 5v-3H0z" fill="#aaa" stroke="#eee" /></Icon></button>
      <div className="relative h-[22px] w-[253px]">
        <select aria-label="活动设计选项" className="h-full w-full appearance-none border border-[#eee] bg-white pl-px text-[#777]"><option>主模型</option></select>
        <Chevron className="pointer-events-none absolute top-[5px] right-0.5 text-[#999]" />
      </div>
      <div className="relative mr-[69px] ml-auto flex">
        {selectIcons.map(([n, d]) => <button key={n} aria-label={n} className="flex w-[30px] justify-center"><Icon>{d}</Icon></button>)}
        <span className="pl-px text-[#444]">:1</span>
        <span className="pointer-events-none absolute top-1 left-[82px] text-[20px] leading-6 whitespace-nowrap text-[#c4c4c4] [text-shadow:1px_1px_1px_#555]">CSDN @极客BIM工作室</span>
      </div>
    </footer>
  );
}

export default function App() {
  return (
    <div className="relative flex min-h-screen flex-col bg-black font-['Noto_Sans','Noto_Sans_CJK_SC',sans-serif]">
      <div className="relative flex h-[9px] justify-end overflow-hidden bg-gradient-to-r from-[#1d2026] via-[#222228] to-[#37232a]">
        <span className="absolute top-0 left-0 h-full w-[22px] bg-black" />
        <span className="absolute bottom-0 left-[77px] h-0.5 w-[191px] bg-[#6cb2ee]" />
        <span className="-mt-2.5 text-[14px] leading-4 text-white">2022/10/8</span>
      </div>
      <div className="flex flex-1 pr-[9px]">
        <div className="flex w-[9px] shrink-0 flex-col overflow-hidden">
          <span className="grow-[797] bg-[#cbcbcb]" />
          <span className="flex h-10 items-end justify-end bg-[#222226] pr-[7px] pb-1 text-[13px] leading-4 text-white">5</span>
          <span className="grow-[193]" />
        </div>
        <div className="flex min-w-0 flex-1 flex-col bg-[#cbcbcb]">
          <TitleBar />
          <RibbonTabs />
          <Ribbon />
          <div className="mb-0.5 flex h-[33px] items-center bg-[#e4efd6] pt-0.5 pl-3 text-[15px] text-black">修改 | 点云</div>
          <div className="flex flex-1">
            <Properties />
            <ViewArea />
          </div>
          <StatusBar />
        </div>
      </div>
      <div className="flex h-[9px] items-start justify-end overflow-hidden bg-gradient-to-r from-[#1b2027] via-[#232227] to-[#33222a] pr-[102px]">
        <span className="pt-1.5 text-[13px] leading-4 text-white">11:38</span>
      </div>
      <svg viewBox="780 141 107 314" className="pointer-events-none absolute top-[141px] left-[780px] z-20 h-[314px] w-[107px]" aria-hidden="true">
        <path d="M780 141L781.500 141L868.500 399L881 442L886 440.500L883.500 454.500L872.500 444.500L876.500 443.500L862.500 400Z" fill="#ff2412" />
      </svg>
    </div>
  );
}
